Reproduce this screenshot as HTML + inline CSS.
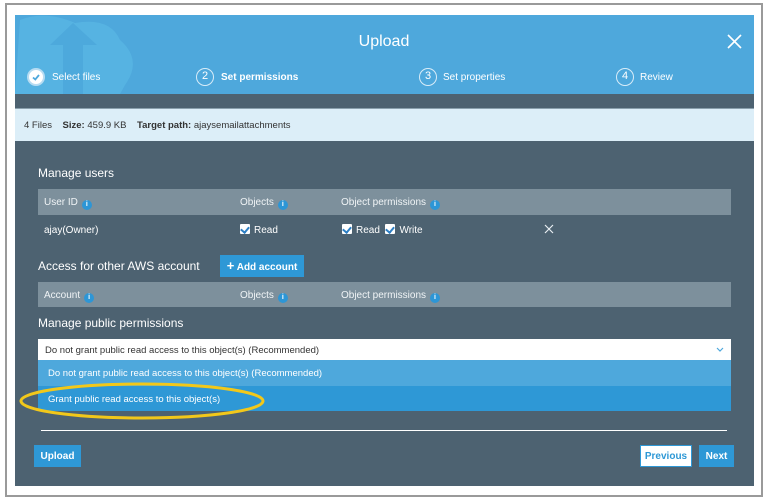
<!DOCTYPE html>
<html><head><style>
*{margin:0;padding:0;box-sizing:border-box}
body{width:768px;height:504px;background:#fff;font-family:"Liberation Sans",sans-serif;position:relative;overflow:hidden}
.a{position:absolute}
.frame{left:5px;top:3px;width:758px;height:494px;border:2px solid #9a9a9a}
.t{color:#fff;font-size:10px}
.hd{background:#7d909c;left:38px;width:693px;height:26px}
.hd span{position:absolute;top:8px;font-size:10px;color:#f0f4f6}
.i{display:inline-block;width:10px;height:10px;border-radius:50%;background:#2d96d6;vertical-align:-1px;margin-left:4px;color:#fff;font-size:7px;text-align:center;line-height:10px;font-weight:bold;font-style:normal}
.cb{display:inline-block;width:10px;height:10px;background:#fff;border-radius:1px;vertical-align:-1px;margin-right:4px;position:relative}
.cb:after{content:"";position:absolute;left:2px;top:1px;width:4px;height:6px;border:solid #2d7fc4;border-width:0 2px 2px 0;transform:rotate(40deg)}
.circ{width:18px;height:18px;border:1.5px solid #d8ecf8;border-radius:50%;color:#fff;font-size:11px;text-align:center;line-height:15px}
.btn{background:#2e98d6;color:#fff;font-size:10px;font-weight:bold;text-align:center}
</style></head><body>
<div class="a frame"></div>
<div class="a" style="left:15px;top:15px;width:739px;height:471px;background:#4d6271"></div>
<div class="a" style="left:15px;top:15px;width:739px;height:79px;background:#4ea8dc;overflow:hidden">
<svg width="130" height="79" style="position:absolute;left:0;top:0"><path d="M5 5 Q30 -5 60 8 Q95 2 105 25 Q128 45 110 70 L105 79 L0 79 Z" fill="#56b3e2"/><path d="M35 30 L58 8 L82 30 L68 30 L68 79 L48 79 L48 30 Z" fill="#4da9dc"/></svg>
</div>
<div class="a t" style="left:0;width:768px;top:33px;text-align:center;font-size:16px">Upload</div>
<svg class="a" style="left:727px;top:34px" width="15" height="15"><path d="M1 1L14 14M14 1L1 14" stroke="#fff" stroke-width="1.6"/></svg>
<div class="a" style="left:27px;top:68px;width:18px;height:18px;border-radius:50%;background:#fff;border:2px solid #b7dcf2"></div>
<svg class="a" style="left:30px;top:71px" width="12" height="12"><path d="M3 6.5L5.3 8.5L9 4" stroke="#4ea8dc" stroke-width="1.8" fill="none"/></svg>
<div class="a t" style="left:52px;top:72px">Select files</div>
<div class="a circ" style="left:196px;top:68px">2</div>
<div class="a t" style="left:221px;top:72px;font-weight:bold">Set permissions</div>
<div class="a circ" style="left:419px;top:68px">3</div>
<div class="a t" style="left:443px;top:72px">Set properties</div>
<div class="a circ" style="left:616px;top:68px">4</div>
<div class="a t" style="left:640px;top:72px">Review</div>
<div class="a" style="left:15px;top:108px;width:739px;height:33px;background:#dceef8;border-top:1px solid #8aa0ad"></div>
<div class="a" style="left:24px;top:120px;font-size:9.5px;color:#333">4 Files &nbsp;&nbsp; <b>Size:</b> 459.9 KB &nbsp;&nbsp; <b>Target path:</b> ajaysemailattachments</div>
<div class="a t" style="left:38px;top:166px;font-size:12px">Manage users</div>
<div class="a hd" style="top:189px"><span style="left:6px">User ID<i class="i">i</i></span><span style="left:202px">Objects<i class="i">i</i></span><span style="left:303px">Object permissions<i class="i">i</i></span></div>
<div class="a t" style="left:44px;top:225px">ajay(Owner)</div>
<div class="a t" style="left:240px;top:224px"><span class="cb"></span>Read</div>
<div class="a t" style="left:342px;top:224px"><span class="cb"></span>Read &nbsp;<span class="cb"></span>Write</div>
<svg class="a" style="left:544px;top:224px" width="10" height="10"><path d="M1 1L9 9M9 1L1 9" stroke="#e8eef2" stroke-width="1.2"/></svg>
<div class="a t" style="left:38px;top:259px;font-size:12px">Access for other AWS account</div>
<div class="a btn" style="left:220px;top:255px;width:84px;height:22px;line-height:22px"><span style="font-size:13px">+</span> Add account</div>
<div class="a hd" style="top:282px;height:25px"><span style="left:6px">Account<i class="i">i</i></span><span style="left:202px">Objects<i class="i">i</i></span><span style="left:303px">Object permissions<i class="i">i</i></span></div>
<div class="a t" style="left:38px;top:316px;font-size:12px">Manage public permissions</div>
<div class="a" style="left:38px;top:339px;width:693px;height:21px;background:#fff;font-size:9.5px;color:#333;padding:6px 7px">Do not grant public read access to this object(s) (Recommended)</div>
<svg class="a" style="left:716px;top:347px" width="8" height="6"><path d="M1 1L4 4L7 1" stroke="#4ea8dc" stroke-width="1.2" fill="none"/></svg>
<div class="a t" style="left:38px;top:360px;width:693px;height:26px;background:#4ea8dc;padding:8px 10px;font-size:9.5px">Do not grant public read access to this object(s) (Recommended)</div>
<div class="a t" style="left:38px;top:386px;width:693px;height:25px;background:#2e98d6;padding:8px 10px;font-size:9.5px">Grant public read access to this object(s)</div>
<svg class="a" style="left:15px;top:380px" width="250" height="44"><ellipse cx="127" cy="21" rx="121" ry="17" fill="none" stroke="#f2c81a" stroke-width="3"/></svg>
<div class="a" style="left:41px;top:430px;width:686px;height:1px;background:#fff"></div>
<div class="a btn" style="left:34px;top:445px;width:47px;height:22px;line-height:23px">Upload</div>
<div class="a btn" style="left:640px;top:445px;width:52px;height:22px;line-height:21px;background:#fff;color:#2e98d6;border:1px solid #2e98d6">Previous</div>
<div class="a btn" style="left:699px;top:445px;width:35px;height:22px;line-height:23px">Next</div>
</body></html>
